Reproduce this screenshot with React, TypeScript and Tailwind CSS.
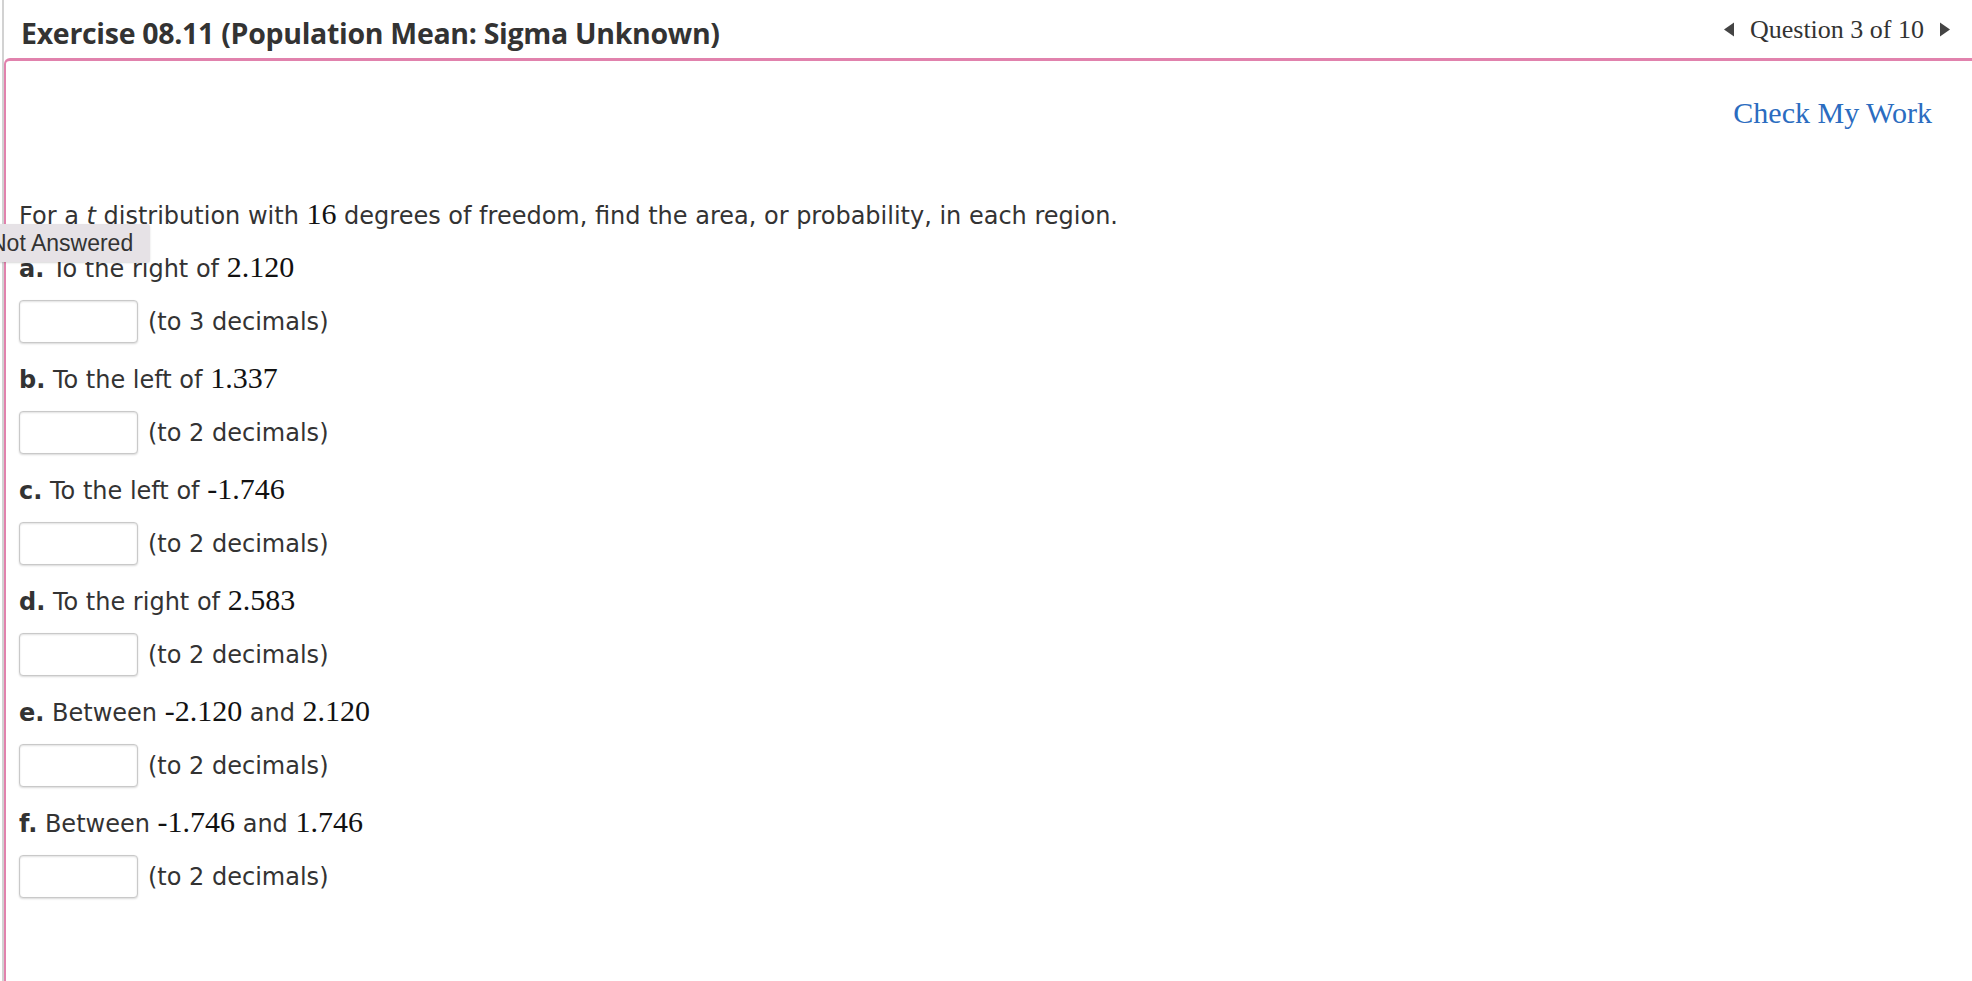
import React from 'react';

const items = [
  { key: 'a', parts: ['To the right of ', '2.120'], dec: 3 },
  { key: 'b', parts: ['To the left of ', '1.337'], dec: 2 },
  { key: 'c', parts: ['To the left of ', '-1.746'], dec: 2 },
  { key: 'd', parts: ['To the right of ', '2.583'], dec: 2 },
  { key: 'e', parts: ['Between ', '-2.120', ' and ', '2.120'], dec: 2 },
  { key: 'f', parts: ['Between ', '-1.746', ' and ', '1.746'], dec: 2 },
];

function Math({ children }: { children: React.ReactNode }) {
  return <span className="font-['Liberation_Serif',serif] text-[30px] text-[#111]">{children}</span>;
}

function Item({ item }: { item: (typeof items)[number] }) {
  return (
    <div className="pb-[21px]">
      <div className="h-[28px] leading-[28px]">
        <b className="font-bold">{item.key}.</b>{' '}
        {item.parts.map((p, i) => (i % 2 === 1 ? <Math key={i}>{p}</Math> : <span key={i}>{p}</span>))}
      </div>
      <div className="mt-[19px] flex items-center gap-[10px]">
        <input
          type="text"
          className="h-[43px] w-[119px] rounded-[4px] border border-[#c9c9c9] bg-white shadow-[inset_0_1px_2px_rgba(0,0,0,0.12),0_1px_2px_rgba(0,0,0,0.15)] outline-none"
        />
        <span>(to {item.dec} decimals)</span>
      </div>
    </div>
  );
}

export default function App() {
  return (
    <div className="min-h-screen overflow-hidden bg-white pl-[2px]">
      <div className="min-h-screen border-l-2 border-[#d2d2d2]">
        {/* header */}
        <div className="flex h-[58px] items-center justify-between pl-[17px] pr-[22px]">
          <h1 className="mt-[8px] font-['Open_Sans',sans-serif] text-[28.5px] font-bold tracking-[-0.3px] text-[#333]">
            Exercise 08.11 (Population Mean: Sigma Unknown)
          </h1>
          <div className="flex items-center gap-[16px] font-['Liberation_Serif',serif] text-[26px] text-[#333]">
            <svg width="10" height="15" viewBox="0 0 10 14" className="text-[#444]">
              <path d="M10 0 L0 7 L10 14 Z" fill="currentColor" />
            </svg>
            <span>Question 3 of 10</span>
            <svg width="10" height="15" viewBox="0 0 10 14" className="text-[#444]">
              <path d="M0 0 L10 7 L0 14 Z" fill="currentColor" />
            </svg>
          </div>
        </div>

        {/* content */}
        <div className="min-h-[923px] rounded-tl-[6px] border-l-2 border-t-[3px] border-[#e182ad] font-['DejaVu_Sans',Verdana,sans-serif] text-[24px] text-[#333]">
          <div className="flex justify-end pr-[40px] pt-[36px]">
            <a className="font-['Liberation_Serif',serif] text-[30px] leading-[32px] text-[#2b6cc0]">Check My Work</a>
          </div>

          <div className="relative pl-[13px] pt-[71px]">
            <p className="h-[28px] leading-[28px]">
              For a <i className="italic">t</i> distribution with <Math>16</Math> degrees of freedom, find the area, or
              probability, in each region.
            </p>

            <div className="absolute left-[-22px] top-[95px] z-10 flex h-[38px] items-center rounded-r-[3px] bg-[#e6e2e6] pl-[6px] pr-[17px] font-['Liberation_Sans',Arial,sans-serif] text-[23px] text-[#333] shadow-[0_1px_2px_rgba(0,0,0,0.15)]">
              Not Answered
            </div>

            <div className="pt-[25px]">
              {items.map((it) => (
                <Item key={it.key} item={it} />
              ))}
            </div>
          </div>
        </div>
      </div>
    </div>
  );
}
